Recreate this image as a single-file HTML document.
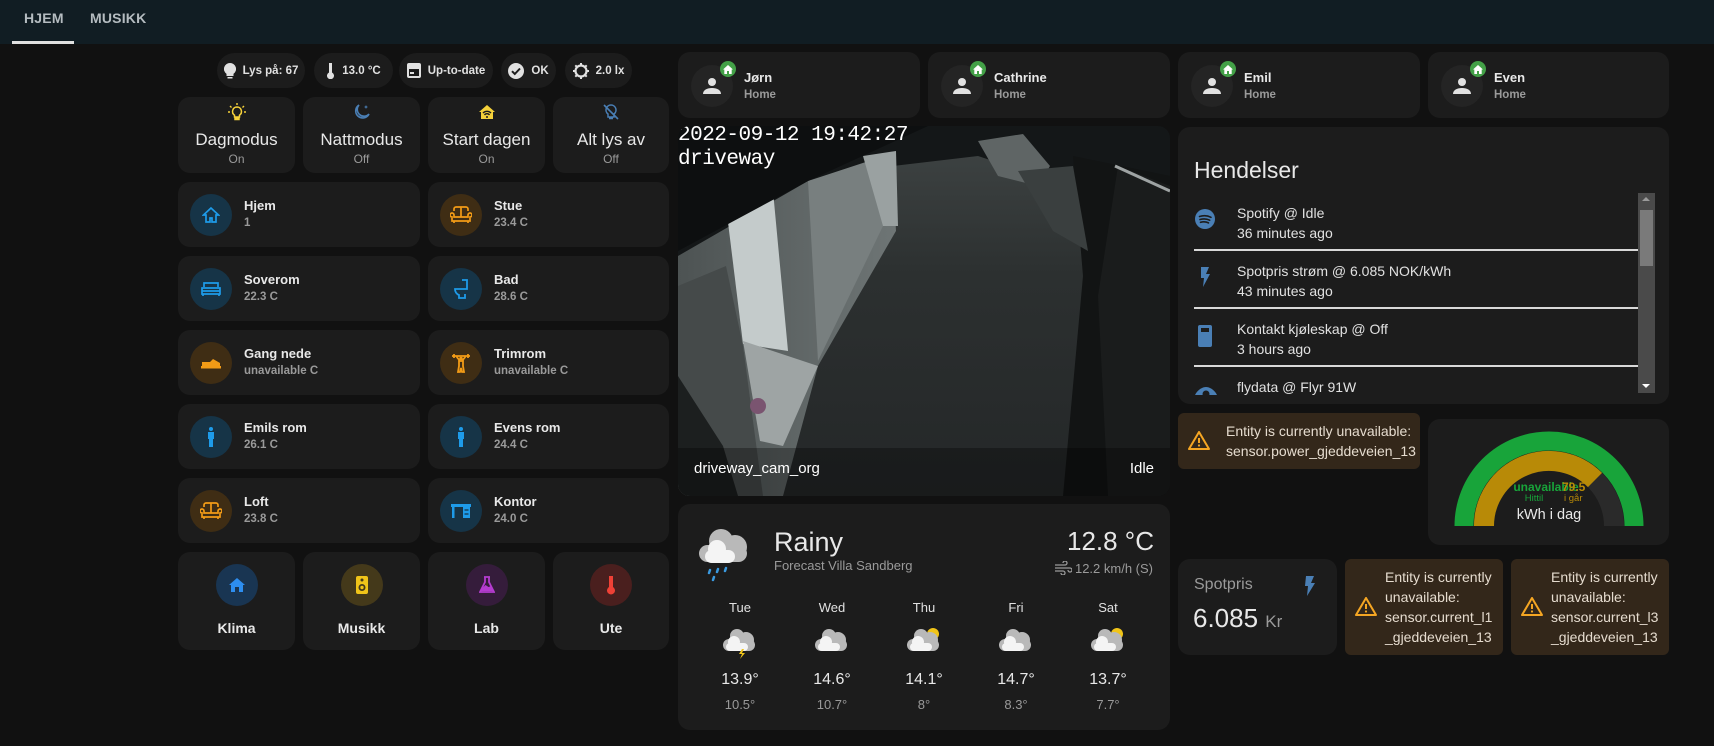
<!DOCTYPE html>
<html><head><meta charset="utf-8"><style>
*{box-sizing:border-box;margin:0;padding:0}
body{width:1714px;height:746px;background:#111111;font-family:"Liberation Sans",Arial,sans-serif;color:#e1e1e1;position:relative;overflow:hidden}
.a{position:absolute}
.card{position:absolute;background:#1c1c1c;border-radius:12px}
.hdr{position:absolute;left:0;top:0;width:1714px;height:44px;background:#111d23}
.tab{position:absolute;top:10px;font-size:14px;font-weight:bold;color:#b5bcc0;letter-spacing:.2px}
.chip{position:absolute;top:53px;height:35px;border-radius:18px;background:#1c1c1c;font-size:11.5px;font-weight:bold;color:#e1e1e1;display:flex;align-items:center;justify-content:center;gap:7px}
.scene{top:97px;height:76px;text-align:center}
.scene .n{position:absolute;left:0;right:0;top:33px;font-size:17px;color:#e8e8e8}
.scene .s{position:absolute;left:0;right:0;top:55px;font-size:12px;color:#9a9a9a}
.scene svg{position:absolute;left:50%;top:6px;margin-left:-9px}
.area{height:65px}
.area .ic{position:absolute;left:12px;top:12px;width:42px;height:42px;border-radius:50%;display:flex;align-items:center;justify-content:center}
.area .n{position:absolute;left:66px;top:16px;font-size:13px;font-weight:bold;color:#e8e8e8}
.area .s{position:absolute;left:66px;top:35px;font-size:11.5px;font-weight:bold;color:#9a9a9a}
.blue{background:#163447}.orng{background:#3f2d14}
.btn{top:552px;height:98px}
.btn .ic{position:absolute;left:50%;margin-left:-21px;top:12px;width:42px;height:42px;border-radius:50%;display:flex;align-items:center;justify-content:center}
.btn .n{position:absolute;left:0;right:0;top:68px;text-align:center;font-size:14px;font-weight:bold;color:#e8e8e8}
.person{top:52px;height:66px;width:242px}
.person .av{position:absolute;left:13px;top:13px;width:42px;height:42px;border-radius:50%;background:#242424;display:flex;align-items:center;justify-content:center}
.person .bd{position:absolute;left:42px;top:9px;width:16px;height:16px;border-radius:50%;background:#43a047;display:flex;align-items:center;justify-content:center}
.person .n{position:absolute;left:66px;top:18px;font-size:13px;font-weight:bold;color:#e8e8e8}
.person .s{position:absolute;left:66px;top:37px;font-size:11.5px;font-weight:bold;color:#9a9a9a}
.day{position:absolute;width:92px;text-align:center}
.warn{position:absolute;background:#33271a;border-radius:6px;color:#e6dccf;font-size:14px;line-height:20px}
.ev{position:absolute;left:17px;width:435px}
.ev .t{position:absolute;left:42px;top:0;font-size:14px;color:#e1e1e1;white-space:nowrap}
.ev .u{position:absolute;left:42px;top:20px;font-size:14px;color:#e1e1e1}
.ev svg{position:absolute;left:0;top:4px}
.line{position:absolute;left:1194px;width:444px;height:2px;background:#d8d8d8}
</style></head><body>

<div class="hdr"></div>
<div class="tab" style="left:24px">HJEM</div>
<div class="tab" style="left:90px">MUSIKK</div>
<div class="a" style="left:12px;top:41px;width:62px;height:3px;background:#e0e0e0"></div>

<div class="chip" style="left:217px;width:88px"><svg width="12" height="16" viewBox="0 0 12 16"><path d="M6 0a6 6 0 0 0-3.5 10.9V13h7v-2.1A6 6 0 0 0 6 0zM3.5 14h5v1.5h-5z" fill="#e1e1e1"/></svg>Lys på: 67</div>
<div class="chip" style="left:314px;width:79px"><svg width="9" height="17" viewBox="0 0 9 17"><path d="M3 1h3v9.5a3.5 3.5 0 1 1-3 0z" fill="#e1e1e1"/></svg>13.0 °C</div>
<div class="chip" style="left:399px;width:94px"><svg width="14" height="15" viewBox="0 0 14 15"><rect x="0" y="0" width="14" height="15" rx="2" fill="#e1e1e1"/><rect x="2" y="6" width="10" height="7" fill="#1c1c1c"/><rect x="3" y="9" width="4" height="2" fill="#e1e1e1"/></svg>Up-to-date</div>
<div class="chip" style="left:501px;width:55px"><svg width="16" height="16" viewBox="0 0 16 16"><circle cx="8" cy="8" r="8" fill="#e1e1e1"/><path d="M4 8.2l2.8 2.8L12 5.5" stroke="#1c1c1c" stroke-width="2" fill="none"/></svg>OK</div>
<div class="chip" style="left:565px;width:67px"><svg width="16" height="16" viewBox="0 0 16 16"><circle cx="8" cy="8" r="5.5" fill="none" stroke="#e1e1e1" stroke-width="2.2"/><path d="M8 0v3M8 13v3M0 8h3M13 8h3M2.3 2.3l2 2M11.7 11.7l2 2M2.3 13.7l2-2M11.7 4.3l2-2" stroke="#e1e1e1" stroke-width="2"/></svg>2.0 lx</div>

<div class="card scene" style="left:178px;width:117px"><svg width="18" height="18" viewBox="0 0 18 18"><path d="M9 4a4.5 4.5 0 0 0-2.5 8.2V14h5v-1.8A4.5 4.5 0 0 0 9 4zM7 15h4v1.5H7z" fill="none" stroke="#f5d13a" stroke-width="1.5"/><path d="M9 0v2M2 3l1.5 1.5M16 3l-1.5 1.5M0 9h2M16 9h2" stroke="#f5d13a" stroke-width="1.4"/></svg><div class="n">Dagmodus</div><div class="s">On</div></div>
<div class="card scene" style="left:303px;width:117px"><svg width="18" height="18" viewBox="0 0 18 18"><path d="M6 2a7 7 0 1 0 10 9A6 6 0 0 1 6 2z" fill="none" stroke="#4a7fb5" stroke-width="1.6"/><path d="M13 2l.6 1.4L15 4l-1.4.6L13 6l-.6-1.4L11 4l1.4-.6z" fill="#4a7fb5"/></svg><div class="n">Nattmodus</div><div class="s">Off</div></div>
<div class="card scene" style="left:428px;width:117px"><svg width="18" height="18" viewBox="0 0 18 18"><path d="M9 2L1 9h2v7h12V9h2z" fill="#f5d13a"/><path d="M5 10a5.5 5.5 0 0 1 8 0M6.5 12a3 3 0 0 1 5 0" stroke="#1c1c1c" stroke-width="1.4" fill="none"/><circle cx="9" cy="14" r="1" fill="#1c1c1c"/></svg><div class="n">Start dagen</div><div class="s">On</div></div>
<div class="card scene" style="left:553px;width:116px"><svg width="18" height="18" viewBox="0 0 18 18"><path d="M9 2a5 5 0 0 0-3 9v3h6v-3A5 5 0 0 0 9 2zM7 15.5h4" fill="none" stroke="#4a7fb5" stroke-width="1.5"/><path d="M2 2l14 14" stroke="#4a7fb5" stroke-width="1.6"/></svg><div class="n">Alt lys av</div><div class="s">Off</div></div>

<div class="card area" style="left:178px;top:182px;width:242px"><div class="ic blue"><svg width="18" height="18" viewBox="0 0 18 18"><path d="M9 2L1.5 9H4v7h4v-4h2v4h4V9h2.5z" fill="none" stroke="#1e9be9" stroke-width="1.7"/></svg></div><div class="n">Hjem</div><div class="s">1</div></div>
<div class="card area" style="left:428px;top:182px;width:241px"><div class="ic orng"><svg width="22" height="18" viewBox="0 0 22 18"><path d="M4 5V3a2 2 0 0 1 2-2h10a2 2 0 0 1 2 2v2M2 7a2 2 0 0 1 2 2v2h14V9a2 2 0 1 1 2 2v4H2v-4a2 2 0 0 1 0-4zM11 1v10M4 15v2M18 15v2" fill="none" stroke="#f29b16" stroke-width="1.7"/></svg></div><div class="n">Stue</div><div class="s">23.4 C</div></div>
<div class="card area" style="left:178px;top:256px;width:242px"><div class="ic blue"><svg width="20" height="16" viewBox="0 0 20 16"><path d="M3 6V2h14v4M1 7h18v6H1zM2 13v2M18 13v2M1 10h18" fill="none" stroke="#1e9be9" stroke-width="1.7"/></svg></div><div class="n">Soverom</div><div class="s">22.3 C</div></div>
<div class="card area" style="left:428px;top:256px;width:241px"><div class="ic blue"><svg width="16" height="20" viewBox="0 0 16 20"><path d="M9 1h5v9H2a6 6 0 0 0 4 6v3h6v-4" fill="none" stroke="#1e9be9" stroke-width="1.8"/></svg></div><div class="n">Bad</div><div class="s">28.6 C</div></div>
<div class="card area" style="left:178px;top:330px;width:242px"><div class="ic orng"><svg width="22" height="12" viewBox="0 0 22 12"><path d="M2 5h8l3-3 7 4v3H2z" fill="#f29b16"/><rect x="1" y="9" width="20" height="2.5" fill="#f29b16"/></svg></div><div class="n">Gang nede</div><div class="s">unavailable C</div></div>
<div class="card area" style="left:428px;top:330px;width:241px"><div class="ic orng"><svg width="20" height="20" viewBox="0 0 20 20"><path d="M1 3h18M3 1v4M17 1v4M5 3l4 5h2l4-5M8 8h4v5l1 6h-2l-1-4-1 4H7l1-6z" fill="none" stroke="#f29b16" stroke-width="1.8"/><circle cx="10" cy="5.5" r="1.8" fill="#f29b16"/></svg></div><div class="n">Trimrom</div><div class="s">unavailable C</div></div>
<div class="card area" style="left:178px;top:404px;width:242px"><div class="ic blue"><svg width="8" height="20" viewBox="0 0 8 20"><circle cx="4" cy="2" r="2" fill="#1e9be9"/><path d="M1 5h6v7H6v8H2v-8H1z" fill="#1e9be9"/></svg></div><div class="n">Emils rom</div><div class="s">26.1 C</div></div>
<div class="card area" style="left:428px;top:404px;width:241px"><div class="ic blue"><svg width="8" height="20" viewBox="0 0 8 20"><circle cx="4" cy="2" r="2" fill="#1e9be9"/><path d="M1 5h6v7H6v8H2v-8H1z" fill="#1e9be9"/></svg></div><div class="n">Evens rom</div><div class="s">24.4 C</div></div>
<div class="card area" style="left:178px;top:478px;width:242px"><div class="ic orng"><svg width="22" height="18" viewBox="0 0 22 18"><path d="M4 5V3a2 2 0 0 1 2-2h10a2 2 0 0 1 2 2v2M2 7a2 2 0 0 1 2 2v2h14V9a2 2 0 1 1 2 2v4H2v-4a2 2 0 0 1 0-4zM11 1v10M4 15v2M18 15v2" fill="none" stroke="#f29b16" stroke-width="1.7"/></svg></div><div class="n">Loft</div><div class="s">23.8 C</div></div>
<div class="card area" style="left:428px;top:478px;width:241px"><div class="ic blue"><svg width="20" height="14" viewBox="0 0 20 14"><path d="M0 0h20v3H0zM1 3h2.5v11H1zM12 3h7v11h-7z" fill="#1e9be9"/><path d="M13.5 6h4M13.5 10h4" stroke="#163447" stroke-width="1.3"/></svg></div><div class="n">Kontor</div><div class="s">24.0 C</div></div>

<div class="card btn" style="left:178px;width:117px"><div class="ic" style="background:#193552"><svg width="16" height="14" viewBox="0 0 16 14"><path d="M8 0L0 7h2v7h4V9h4v5h4V7h2z" fill="#2d8ef0"/></svg></div><div class="n">Klima</div></div>
<div class="card btn" style="left:303px;width:117px"><div class="ic" style="background:#44391a"><svg width="12" height="18" viewBox="0 0 12 18"><rect x="0" y="0" width="12" height="18" rx="2" fill="#f0c419"/><circle cx="6" cy="4" r="1.5" fill="#44391a"/><circle cx="6" cy="11.5" r="3.5" fill="#44391a"/><circle cx="6" cy="11.5" r="1.7" fill="#f0c419"/></svg></div><div class="n">Musikk</div></div>
<div class="card btn" style="left:428px;width:117px"><div class="ic" style="background:#351c3b"><svg width="16" height="18" viewBox="0 0 16 18"><path d="M5 1h6M6 1v5L1 16h14L10 6V1" fill="none" stroke="#b43ccf" stroke-width="1.8"/><path d="M3.5 12l3-3 3 2 3-1 1.5 5H2z" fill="#b43ccf"/></svg></div><div class="n">Lab</div></div>
<div class="card btn" style="left:553px;width:116px"><div class="ic" style="background:#4a1f1e"><svg width="10" height="20" viewBox="0 0 10 20"><path d="M3 1h4v11a4 4 0 1 1-4 0z" fill="#ef4136"/></svg></div><div class="n">Ute</div></div>

<div class="card person" style="left:678px"><div class="av"><svg width="18" height="16" viewBox="0 0 18 16"><circle cx="9" cy="4" r="4" fill="#e1e1e1"/><path d="M0 16c0-4 4-6 9-6s9 2 9 6z" fill="#e1e1e1"/></svg></div><div class="bd"><svg width="10" height="9" viewBox="0 0 10 9"><path d="M5 0L0 4.5h1.3V9h2.7V6h2v3h2.7V4.5H10z" fill="#fff"/></svg></div><div class="n">Jørn</div><div class="s">Home</div></div>
<div class="card person" style="left:928px"><div class="av"><svg width="18" height="16" viewBox="0 0 18 16"><circle cx="9" cy="4" r="4" fill="#e1e1e1"/><path d="M0 16c0-4 4-6 9-6s9 2 9 6z" fill="#e1e1e1"/></svg></div><div class="bd"><svg width="10" height="9" viewBox="0 0 10 9"><path d="M5 0L0 4.5h1.3V9h2.7V6h2v3h2.7V4.5H10z" fill="#fff"/></svg></div><div class="n">Cathrine</div><div class="s">Home</div></div>
<div class="card person" style="left:1178px"><div class="av"><svg width="18" height="16" viewBox="0 0 18 16"><circle cx="9" cy="4" r="4" fill="#e1e1e1"/><path d="M0 16c0-4 4-6 9-6s9 2 9 6z" fill="#e1e1e1"/></svg></div><div class="bd"><svg width="10" height="9" viewBox="0 0 10 9"><path d="M5 0L0 4.5h1.3V9h2.7V6h2v3h2.7V4.5H10z" fill="#fff"/></svg></div><div class="n">Emil</div><div class="s">Home</div></div>
<div class="card person" style="left:1428px;width:241px"><div class="av"><svg width="18" height="16" viewBox="0 0 18 16"><circle cx="9" cy="4" r="4" fill="#e1e1e1"/><path d="M0 16c0-4 4-6 9-6s9 2 9 6z" fill="#e1e1e1"/></svg></div><div class="bd"><svg width="10" height="9" viewBox="0 0 10 9"><path d="M5 0L0 4.5h1.3V9h2.7V6h2v3h2.7V4.5H10z" fill="#fff"/></svg></div><div class="n">Even</div><div class="s">Home</div></div>

<!-- camera -->
<div class="a" style="left:678px;top:126px;width:492px;height:370px;border-radius:12px;overflow:hidden;background:#141718">
<svg width="492" height="370" viewBox="0 0 492 370" style="position:absolute;left:0;top:0">
<defs><linearGradient id="fl" x1="0" y1="0" x2="0" y2="1"><stop offset="0" stop-color="#3c4141"/><stop offset=".35" stop-color="#2c3030"/><stop offset="1" stop-color="#242728"/></linearGradient>
<linearGradient id="wl" x1="0" y1="0" x2="1" y2="0"><stop offset="0" stop-color="#4d5353"/><stop offset="1" stop-color="#6e7575"/></linearGradient></defs>
<polygon points="215,40 300,30 390,60 410,150 410,370 100,370 140,240 218,105" fill="url(#fl)"/>
<polygon points="300,15 345,8 372,40 360,60 320,50" fill="#5f6565"/>
<polygon points="0,130 130,55 215,30 218,105 140,240 105,370 0,370" fill="url(#wl)"/>
<polygon points="130,55 200,32 205,100 140,235" fill="#787f7f"/>
<polygon points="185,30 218,25 220,100 205,100" fill="#9aa1a1"/>
<polygon points="48,80 95,65 110,225 65,218" fill="#c4cbcb"/>
<polygon points="65,215 140,240 105,320 82,315" fill="#9ea4a4"/>
<polygon points="0,160 48,140 65,220 85,370 0,370" fill="#454a4a"/>
<polygon points="0,250 45,320 60,370 0,370" fill="#1c1f1f"/>
<polygon points="0,0 250,0 130,55 0,125" fill="#0d0f10"/>
<polygon points="395,30 492,50 492,370 385,370 405,150" fill="#121414"/>
<polygon points="440,40 492,60 492,370 430,370 420,170" fill="#1a1c1c"/>
<polygon points="340,45 395,40 410,125 375,105" fill="#3a3f3f"/>
<line x1="437" y1="40" x2="492" y2="65" stroke="#9ea3a3" stroke-width="3"/>
<circle cx="80" cy="280" r="8" fill="#7a5470"/>
</svg>
<div class="a" style="left:0;top:-2px;font-family:'Liberation Mono',monospace;font-size:21px;color:#fff;line-height:24px;letter-spacing:-0.5px">2022-09-12 19:42:27<br>driveway</div>
<div class="a" style="left:0;top:322px;width:492px;height:48px;background:rgba(0,0,0,.3)"></div>
<div class="a" style="left:16px;top:334px;font-size:15px;color:#fff">driveway_cam_org</div>
<div class="a" style="right:16px;top:334px;font-size:15px;color:#fff">Idle</div>
</div>

<div class="card" style="left:678px;top:504px;width:492px;height:226px"></div>
<svg class="a" style="left:699px;top:527px" width="55" height="58" viewBox="0 0 55 58"><circle cx="22" cy="14" r="12" fill="#b9b9b9"/><circle cx="36" cy="20" r="12" fill="#b9b9b9"/><rect x="0" y="18" width="48" height="17" rx="8.5" fill="#b9b9b9"/><circle cx="18" cy="22" r="9" fill="#f4f4f4"/><rect x="6" y="23" width="30" height="13" rx="6.5" fill="#f4f4f4"/><path d="M11 43l-1 3M19 42l-1 3M27 41l-1 3M15 50l-1 3" stroke="#3a9ae0" stroke-width="2.5" stroke-linecap="round"/></svg>
<div class="a" style="left:774px;top:527px;font-size:27px;color:#e8e8e8">Rainy</div>
<div class="a" style="left:774px;top:558px;font-size:13px;color:#9a9a9a">Forecast Villa Sandberg</div>
<div class="a" style="right:560px;top:526px;font-size:26px;color:#e8e8e8">12.8 °C</div>
<div class="a" style="right:561px;top:561px;font-size:13px;color:#9a9a9a"><svg width="17" height="14" viewBox="0 0 17 14" style="vertical-align:-2px;margin-right:3px"><path d="M0 4h10a2 2 0 1 0-2-2M0 7h15a2 2 0 1 1-2 2M0 10h8a2 2 0 1 1-2 2" fill="none" stroke="#9a9a9a" stroke-width="1.3"/></svg>12.2 km/h (S)</div>

<div class="day" style="left:694px;top:600px"><div style="font-size:13px;color:#e1e1e1">Tue</div></div>
<div class="day" style="left:786px;top:600px"><div style="font-size:13px;color:#e1e1e1">Wed</div></div>
<div class="day" style="left:878px;top:600px"><div style="font-size:13px;color:#e1e1e1">Thu</div></div>
<div class="day" style="left:970px;top:600px"><div style="font-size:13px;color:#e1e1e1">Fri</div></div>
<div class="day" style="left:1062px;top:600px"><div style="font-size:13px;color:#e1e1e1">Sat</div></div>

<svg class="a" style="left:722px;top:627px" width="36" height="34" viewBox="0 0 36 34"><circle cx="15" cy="9" r="7" fill="#b9b9b9"/><circle cx="24" cy="13" r="8" fill="#b9b9b9"/><rect x="1" y="12" width="32" height="12" rx="6" fill="#b9b9b9"/><circle cx="12" cy="15" r="6" fill="#f4f4f4"/><rect x="4" y="16" width="22" height="8" rx="4" fill="#f4f4f4"/><path d="M20 22l-3 5h3l-2 5 5-6h-3l2-4z" fill="#f0c419"/></svg>
<svg class="a" style="left:814px;top:627px" width="36" height="34" viewBox="0 0 36 34"><circle cx="15" cy="9" r="7" fill="#b9b9b9"/><circle cx="24" cy="13" r="8" fill="#b9b9b9"/><rect x="1" y="12" width="32" height="12" rx="6" fill="#b9b9b9"/><circle cx="12" cy="15" r="6" fill="#f4f4f4"/><rect x="4" y="16" width="22" height="8" rx="4" fill="#f4f4f4"/></svg>
<svg class="a" style="left:906px;top:627px" width="36" height="34" viewBox="0 0 36 34"><circle cx="27" cy="7" r="6" fill="#f0c419"/><circle cx="15" cy="9" r="7" fill="#b9b9b9"/><circle cx="24" cy="13" r="8" fill="#b9b9b9"/><rect x="1" y="12" width="32" height="12" rx="6" fill="#b9b9b9"/><circle cx="12" cy="15" r="6" fill="#f4f4f4"/><rect x="4" y="16" width="22" height="8" rx="4" fill="#f4f4f4"/></svg>
<svg class="a" style="left:998px;top:627px" width="36" height="34" viewBox="0 0 36 34"><circle cx="15" cy="9" r="7" fill="#b9b9b9"/><circle cx="24" cy="13" r="8" fill="#b9b9b9"/><rect x="1" y="12" width="32" height="12" rx="6" fill="#b9b9b9"/><circle cx="12" cy="15" r="6" fill="#f4f4f4"/><rect x="4" y="16" width="22" height="8" rx="4" fill="#f4f4f4"/></svg>
<svg class="a" style="left:1090px;top:627px" width="36" height="34" viewBox="0 0 36 34"><circle cx="27" cy="7" r="6" fill="#f0c419"/><circle cx="15" cy="9" r="7" fill="#b9b9b9"/><circle cx="24" cy="13" r="8" fill="#b9b9b9"/><rect x="1" y="12" width="32" height="12" rx="6" fill="#b9b9b9"/><circle cx="12" cy="15" r="6" fill="#f4f4f4"/><rect x="4" y="16" width="22" height="8" rx="4" fill="#f4f4f4"/></svg>

<div class="day" style="left:694px;top:671px;font-size:16px;color:#e8e8e8">13.9°</div>
<div class="day" style="left:786px;top:671px;font-size:16px;color:#e8e8e8">14.6°</div>
<div class="day" style="left:878px;top:671px;font-size:16px;color:#e8e8e8">14.1°</div>
<div class="day" style="left:970px;top:671px;font-size:16px;color:#e8e8e8">14.7°</div>
<div class="day" style="left:1062px;top:671px;font-size:16px;color:#e8e8e8">13.7°</div>
<div class="day" style="left:694px;top:697px;font-size:13px;color:#9a9a9a">10.5°</div>
<div class="day" style="left:786px;top:697px;font-size:13px;color:#9a9a9a">10.7°</div>
<div class="day" style="left:878px;top:697px;font-size:13px;color:#9a9a9a">8°</div>
<div class="day" style="left:970px;top:697px;font-size:13px;color:#9a9a9a">8.3°</div>
<div class="day" style="left:1062px;top:697px;font-size:13px;color:#9a9a9a">7.7°</div>

<div class="card" style="left:1178px;top:127px;width:491px;height:277px;overflow:hidden">
<div class="a" style="left:16px;top:30px;font-size:23px;color:#e8e8e8">Hendelser</div>
<div class="ev" style="top:78px"><svg width="20" height="20" viewBox="0 0 20 20"><circle cx="10" cy="10" r="10" fill="#4a7fb5"/><path d="M4.5 7.5c4-1.3 8-1 11.5.8M5 10.5c3.5-1 6.7-.8 9.7.7M5.5 13.3c3-.8 5.5-.6 8 .6" stroke="#1c1c1c" stroke-width="1.6" fill="none" stroke-linecap="round"/></svg><div class="t">Spotify @ Idle</div><div class="u">36 minutes ago</div></div>
<div class="ev" style="top:136px"><svg width="20" height="22" viewBox="0 0 20 22"><path d="M6 0h8l-3 7h4L8 20l1-9H6z" fill="#4a7fb5"/></svg><div class="t">Spotpris strøm @ 6.085 NOK/kWh</div><div class="u">43 minutes ago</div></div>
<div class="ev" style="top:194px"><svg width="20" height="24" viewBox="0 0 20 24"><rect x="3" y="0" width="14" height="22" rx="2" fill="#4a7fb5"/><rect x="6" y="3" width="8" height="4" fill="#1c1c1c"/></svg><div class="t">Kontakt kjøleskap @ Off</div><div class="u">3 hours ago</div></div>
<div class="ev" style="top:252px"><svg width="22" height="20" viewBox="0 0 22 20"><path d="M0 12c3-6 8-8 11-8s8 2 11 8z" fill="#4a7fb5"/><circle cx="11" cy="11" r="3.5" fill="#1c1c1c"/></svg><div class="t">flydata @ Flyr 91W</div></div>
</div>
<div class="line" style="top:249px"></div>
<div class="line" style="top:307px"></div>
<div class="line" style="top:365px"></div>
<div class="a" style="left:1638px;top:193px;width:17px;height:200px;background:#4a4a4a"></div>
<div class="a" style="left:1640px;top:210px;width:13px;height:56px;background:#7a7a7a"></div>
<div class="a" style="left:1642px;top:197px;width:0;height:0;border-left:4px solid transparent;border-right:4px solid transparent;border-bottom:4px solid #9a9a9a"></div>
<div class="a" style="left:1642px;top:384px;width:0;height:0;border-left:4px solid transparent;border-right:4px solid transparent;border-top:4px solid #fff"></div>

<div class="warn" style="left:1178px;top:413px;width:242px;height:56px"><svg class="a" style="left:10px;top:18px" width="22" height="19" viewBox="0 0 22 19"><path d="M11 1L1 18h20z" fill="none" stroke="#f5a623" stroke-width="2" stroke-linejoin="round"/><path d="M11 7v5" stroke="#f5a623" stroke-width="2"/><circle cx="11" cy="14.5" r="1.1" fill="#f5a623"/></svg><div class="a" style="left:48px;top:8px">Entity is currently unavailable:<br>sensor.power_gjeddeveien_13</div></div>

<div class="card" style="left:1428px;top:419px;width:241px;height:126px"></div>
<svg class="a" style="left:1428px;top:419px" width="241" height="126" viewBox="0 0 241 126">
<path d="M36 107A85 85 0 0 1 206 107" fill="none" stroke="#18a43a" stroke-width="19"/>
<path d="M56 107A65 65 0 0 1 186 107" fill="none" stroke="#2a2a2a" stroke-width="20"/>
<path d="M56 107A65 65 0 0 1 167 61" fill="none" stroke="#b88a07" stroke-width="20"/>
<text x="118" y="72" font-family="Liberation Sans" font-weight="bold" font-size="12" fill="#18a43a" text-anchor="middle">unavailable</text>
<text x="134" y="72" font-family="Liberation Sans" font-weight="bold" font-size="12" fill="#b88a07">79.5</text>
<text x="106" y="82" font-family="Liberation Sans" font-size="9.5" fill="#18a43a" text-anchor="middle">Hittil</text>
<text x="136" y="82" font-family="Liberation Sans" font-size="9.5" fill="#b88a07">i går</text>
<text x="121" y="100" font-family="Liberation Sans" font-size="14.5" fill="#e8e8e8" text-anchor="middle">kWh i dag</text>
</svg>

<div class="card" style="left:1178px;top:559px;width:159px;height:96px"></div>
<div class="a" style="left:1194px;top:576px;font-size:16px;color:#9a9a9a">Spotpris</div>
<svg class="a" style="left:1303px;top:576px" width="14" height="20" viewBox="0 0 14 20"><path d="M3 0h8l-3 7h4L4 20l1-10H2z" fill="#4a7fb5"/></svg>
<div class="a" style="left:1193px;top:603px;font-size:26px;color:#e8e8e8">6.085 <span style="font-size:17px;color:#9a9a9a">Kr</span></div>

<div class="warn" style="left:1345px;top:559px;width:158px;height:96px"><svg class="a" style="left:10px;top:38px" width="22" height="19" viewBox="0 0 22 19"><path d="M11 1L1 18h20z" fill="none" stroke="#f5a623" stroke-width="2" stroke-linejoin="round"/><path d="M11 7v5" stroke="#f5a623" stroke-width="2"/><circle cx="11" cy="14.5" r="1.1" fill="#f5a623"/></svg><div class="a" style="left:40px;top:8px">Entity is currently<br>unavailable:<br>sensor.current_l1<br>_gjeddeveien_13</div></div>
<div class="warn" style="left:1511px;top:559px;width:158px;height:96px"><svg class="a" style="left:10px;top:38px" width="22" height="19" viewBox="0 0 22 19"><path d="M11 1L1 18h20z" fill="none" stroke="#f5a623" stroke-width="2" stroke-linejoin="round"/><path d="M11 7v5" stroke="#f5a623" stroke-width="2"/><circle cx="11" cy="14.5" r="1.1" fill="#f5a623"/></svg><div class="a" style="left:40px;top:8px">Entity is currently<br>unavailable:<br>sensor.current_l3<br>_gjeddeveien_13</div></div>

</body></html>
